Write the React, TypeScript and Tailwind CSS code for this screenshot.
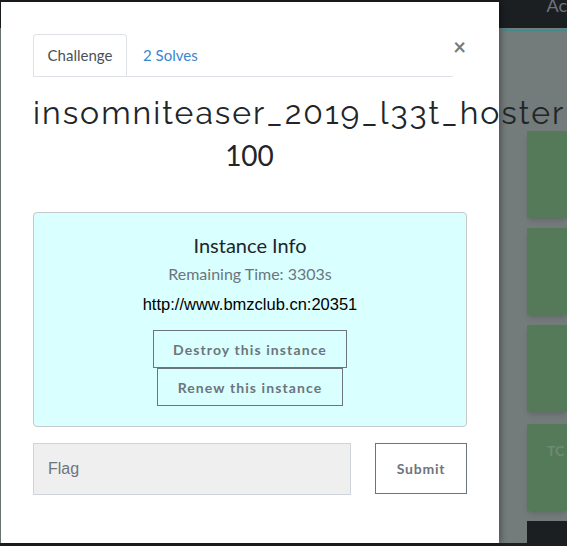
export default function App() {
  return (
    <div className="relative w-[567px] h-[546px] overflow-hidden bg-[#737b7b]" style={{ fontFamily: 'Lato, "Liberation Sans", sans-serif' }}>
      {/* page behind the dialog */}
      <div className="h-[28px] bg-[#1b1f22] flex items-start justify-end">
        <span className="text-[#6c757d] text-[18px] leading-none -mt-[4px] mr-[0px]">Ac</span>
      </div>
      <div className="flex justify-end">
        <div className="w-[63px] h-[3px] border-l border-b border-[#3d8a8a]"></div>
      </div>
      <div className="flex flex-col gap-[10px] items-end mt-[100px]">
        <div className="w-[40px] h-[87px] bg-[#547a5a] shadow-md"></div>
        <div className="w-[40px] h-[87px] bg-[#547a5a] shadow-md"></div>
        <div className="w-[40px] h-[87px] bg-[#547a5a] shadow-md"></div>
        <div className="w-[40px] h-[87px] bg-[#547a5a] shadow-md mt-[2px] pt-[16px] pl-[20px] text-[#6f8a74] font-bold text-[14px]">TC</div>
        <div className="w-[40px] h-[40px] bg-[#1b1f22]"></div>
      </div>
      <div className="absolute left-0 bottom-0 w-[567px] h-[3px] bg-[#1b1f22]"></div>

      {/* dialog */}
      <div className="absolute left-[1px] top-[2px] w-[498px] h-[541px] bg-white shadow-[2px_0_6px_rgba(0,0,0,0.35)] px-[32px] pt-[32px]">
        <div className="flex items-end">
          <div className="flex w-[420px] border-b border-[#dee2e6]">
            <div className="h-[42px] w-[94px] border border-b-0 border-[#dee2e6] rounded-t-[4px] flex items-center justify-center text-[15px] text-[#495057] -mb-px bg-white">Challenge</div>
            <div className="h-[42px] px-[16px] flex items-center text-[15px] text-[#3a86cf]">2 Solves</div>
          </div>
          <div className="flex-1 self-start pt-[2px] flex justify-end pr-[1px]">
            <span className="text-[#7a7a7a] text-[22px] font-bold leading-none">×</span>
          </div>
        </div>

        <h1 className="mt-[16px] whitespace-nowrap text-[32px] leading-[40px] text-[#212529] tracking-[2px] font-normal" style={{ fontFamily: 'Raleway, "Open Sans", sans-serif' }}>
          insomniteaser_2019_l33t_hoster
        </h1>
        <div className="text-center text-[28px] leading-[36px] text-[#212529] mt-[4px] pr-[1px]">100</div>

        <div className="mt-[39px] w-[434px] h-[215px] bg-[#d9ffff] border border-[#c6c8ca] rounded-[4px] flex flex-col items-center pt-[20px]">
          <div className="text-[20px] leading-[24px] text-[#212529]">Instance Info</div>
          <div className="text-[16px] leading-[20px] text-[#6c757d] mt-[7px]">Remaining Time: 3303s</div>
          <div className="text-[16.5px] leading-[20px] text-black mt-[10px]" style={{ fontFamily: '"Liberation Sans", Arial, sans-serif' }}>http://www.bmzclub.cn:20351</div>
          <div className="mt-[16px] flex flex-col items-center">
            <div className="w-[194px] h-[38px] border border-[#6c757d] flex items-center justify-center text-[14px] font-bold tracking-[1.1px] text-[#6c757d]">Destroy this instance</div>
            <div className="w-[186px] h-[38px] border border-[#6c757d] flex items-center justify-center text-[14px] font-bold tracking-[1.1px] text-[#6c757d]">Renew this instance</div>
          </div>
        </div>

        <div className="mt-[16px] flex w-[434px] items-start justify-between">
          <div className="w-[318px] h-[52px] bg-[#efefef] border border-[#ced4da] flex items-center pl-[14px] text-[16px] text-[#6c757d]" style={{ fontFamily: '"Liberation Sans", Arial, sans-serif' }}>Flag</div>
          <div className="w-[92px] h-[51px] border border-[#6c757d] flex items-center justify-center text-[14px] font-bold tracking-[0.8px] text-[#6c757d]">Submit</div>
        </div>
      </div>
    </div>
  );
}
